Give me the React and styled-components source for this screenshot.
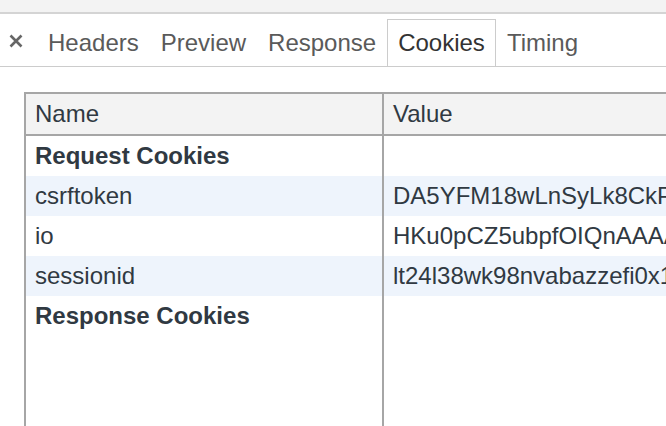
import React from "react";
import styled, { createGlobalStyle } from "styled-components";

const GlobalStyle = createGlobalStyle`
  html, body {
    margin: 0;
    padding: 0;
    background: #fff;
    font-family: "Liberation Sans", Arial, sans-serif;
    overflow: hidden;
  }
`;

const tabs = ["Headers", "Preview", "Response", "Cookies", "Timing"];

const cookies = [
  { section: "Request Cookies" },
  { name: "csrftoken", value: "DA5YFM18wLnSyLk8CkPq3vRtZ0aX" },
  { name: "io", value: "HKu0pCZ5ubpfOIQnAAAAxR7q" },
  { name: "sessionid", value: "lt24l38wk98nvabazzefi0x1q7c" },
  { section: "Response Cookies" },
];

const Page = styled.div`
  width: 666px;
  height: 426px;
  overflow: hidden;
  display: flex;
  flex-direction: column;
`;

const TopStrip = styled.div`
  height: 12px;
  background: #f3f3f3;
  border-bottom: 2px solid #d4d4d4;
  flex-shrink: 0;
`;

const TabBar = styled.div`
  display: flex;
  align-items: flex-end;
  height: 52px;
  border-bottom: 1px solid #cccccc;
  flex-shrink: 0;
`;

const CloseButton = styled.div`
  width: 37px;
  height: 47px;
  display: flex;
  align-items: center;
  justify-content: center;
  padding: 0 6px 4px 0;
  box-sizing: border-box;
`;

const Tab = styled.div`
  height: 47px;
  line-height: 45px;
  padding: 0 10px;
  border: 1px solid ${(p) => (p.$active ? "#cccccc" : "transparent")};
  border-bottom: none;
  box-sizing: border-box;
  font-size: 24px;
  color: ${(p) => (p.$active ? "#333333" : "#5a5a5a")};
  white-space: nowrap;
`;

const Body = styled.div`
  flex: 1;
  padding: 25px 0 0 24px;
  overflow: hidden;
`;

const Grid = styled.div`
  width: 820px;
  height: 420px;
  border-top: 2px solid #a6a6a6;
  border-left: 2px solid #a6a6a6;
  display: grid;
  grid-template-columns: 356px 1fr;
  grid-template-rows: 42px;
  grid-auto-rows: 40px;
  align-content: start;
  position: relative;
  color: #303942;
  font-size: 24px;
`;

const Divider = styled.div`
  position: absolute;
  top: 0;
  bottom: 0;
  left: 356px;
  width: 2px;
  background: #a6a6a6;
`;

const HeadCell = styled.div`
  background: #f3f3f3;
  border-bottom: 2px solid #a6a6a6;
  line-height: 40px;
  padding-left: ${(p) => (p.$second ? "11px" : "9px")};
`;

const Cell = styled.div`
  line-height: 40px;
  padding-left: ${(p) => (p.$second ? "11px" : "9px")};
  background: ${(p) => (p.$striped ? "#eef4fc" : "transparent")};
  font-weight: ${(p) => (p.$bold ? 700 : 400)};
  white-space: nowrap;
  overflow: hidden;
`;

function CloseIcon() {
  return (
    <svg width="14" height="14" viewBox="0 0 14 14">
      <path d="M1.5 1.5 L12.5 12.5 M12.5 1.5 L1.5 12.5" stroke="#666" strokeWidth="2.6" strokeLinecap="butt" />
    </svg>
  );
}

export default function App() {
  return (
    <>
      <GlobalStyle />
      <Page>
        <TopStrip />
        <TabBar>
          <CloseButton>
            <CloseIcon />
          </CloseButton>
          {tabs.map((t) => (
            <Tab key={t} $active={t === "Cookies"}>{t}</Tab>
          ))}
        </TabBar>
        <Body>
          <Grid>
            <HeadCell>Name</HeadCell>
            <HeadCell $second>Value</HeadCell>
            {cookies.map((c, i) => {
              const striped = !c.section && i % 2 === 1;
              return (
                <React.Fragment key={i}>
                  <Cell $bold={!!c.section} $striped={striped}>{c.section || c.name}</Cell>
                  <Cell $second $striped={striped}>{c.value || ""}</Cell>
                </React.Fragment>
              );
            })}
            <Divider />
          </Grid>
        </Body>
      </Page>
    </>
  );
}
